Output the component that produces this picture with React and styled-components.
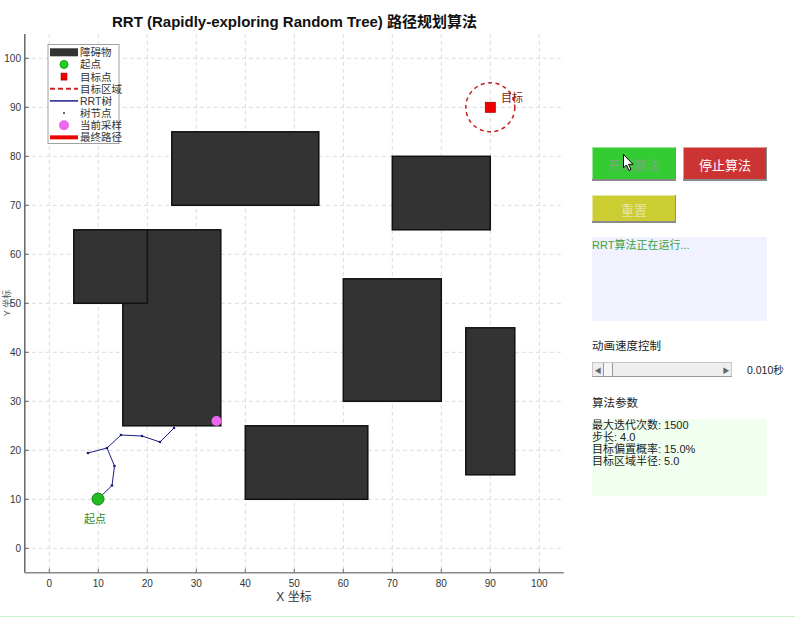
import styled, { createGlobalStyle } from "styled-components";

const FONT = `"Liberation Sans", "Noto Sans CJK SC", sans-serif`;

const GlobalStyle = createGlobalStyle`
  html, body { margin: 0; padding: 0; background: #fff; }
  body { font-family: ${FONT}; overflow: hidden; }
`;

const Window = styled.div`
  position: relative;
  width: 795px;
  height: 616px;
  display: flex;
  background: #ffffff;
  border-bottom: 1px solid #c4f4c4;
`;

const FigurePane = styled.div`
  width: 585px;
  display: flex;
  flex-direction: column;
`;

const Title = styled.h1`
  margin: 0;
  box-sizing: border-box;
  width: 564px;
  height: 34px;
  padding: 13px 0 0 25px;
  text-align: center;
  font-size: 15px;
  line-height: 18px;
  font-weight: bold;
  color: #111;
`;

const ControlPanel = styled.div`
  width: 175px;
  margin-left: 7px;
  padding-top: 147px;
  display: flex;
  flex-direction: column;
`;

const ButtonRow = styled.div`
  display: flex;
  gap: 7px;
`;

const Button = styled.button`
  width: 84px;
  height: ${(p) => p.$h || 34}px;
  margin-top: ${(p) => p.$mt || 0}px;
  padding: 0;
  border: none;
  background: ${(p) => p.$bg};
  color: ${(p) => p.$fg};
  font-family: ${FONT};
  font-size: 13px;
  box-shadow: inset -1px -2px 0 #8a8a8a, inset 1px 1px 0 rgba(255, 255, 255, 0.5);
`;

const StatusBox = styled.div`
  margin-top: 14px;
  height: 84px;
  background: #f1f1ff;
  color: #3ea23e;
  font-size: 11px;
  line-height: 16px;
`;

const SectionLabel = styled.div`
  margin-top: ${(p) => p.$mt}px;
  height: 18px;
  line-height: 18px;
  font-size: 11.5px;
  color: #222;
`;

const SliderRow = styled.div`
  margin-top: 7px;
  display: flex;
  align-items: center;
  height: 15px;
  white-space: nowrap;
`;

const Slider = styled.div`
  flex: none;
  width: 140px;
  height: 15px;
  box-sizing: border-box;
  display: flex;
  background: #eeeeee;
  border: 1px solid #c8c8c8;
  border-bottom-color: #9a9a9a;
`;

const Arrow = styled.div`
  width: 10px;
  display: flex;
  align-items: center;
  justify-content: center;
  font-size: 7px;
  color: #666;
`;

const Thumb = styled.div`
  width: 10px;
  box-sizing: border-box;
  background: #f6f6f6;
  border-left: 1px solid #999;
  border-right: 1px solid #999;
`;

const Track = styled.div`
  flex: 1;
`;

const SliderValue = styled.span`
  flex: none;
  margin-left: 15px;
  font-size: 10.5px;
  color: #222;
`;

const ParamsBox = styled.div`
  margin-top: 7px;
  height: 77px;
  background: #f0fff0;
  font-size: 11px;
  line-height: 12px;
  color: #222;
`;

const Cursor = styled.svg`
  position: absolute;
  left: 623px;
  top: 154px;
`;

const X = (v) => 49.3 + 4.9 * v;
const Y = (v) => 548.3 - 4.9 * v;

const ticks = [0, 10, 20, 30, 40, 50, 60, 70, 80, 90, 100];

// obstacles in data coords [x, y, w, h], drawing order matters
const obstacles = [
  [25, 70, 30, 15],
  [70, 65, 20, 15],
  [15, 25, 20, 40],
  [5, 50, 15, 15],
  [60, 30, 20, 25],
  [85, 15, 10, 30],
  [40, 10, 25, 15],
];

// tree in pixel coords
const nodes = {
  s: [98, 499],
  a: [112, 485.5],
  b: [114.5, 466],
  c: [107, 448],
  d: [88, 453],
  e: [121, 435],
  f: [142, 436],
  g: [160, 442],
  h: [174, 428],
};
const edges = [
  ["s", "a"], ["a", "b"], ["b", "c"], ["c", "d"],
  ["c", "e"], ["e", "f"], ["f", "g"], ["g", "h"],
];

const legend = [
  "障碍物", "起点", "目标点", "目标区域", "RRT树", "树节点", "当前采样", "最终路径",
];

function LegendHandle({ i, y }) {
  switch (i) {
    case 0:
      return <rect x={50} y={y - 4} width={28} height={8} fill="#333" />;
    case 1:
      return <circle cx={64} cy={y} r={4} fill="#22cc22" stroke="#11aa11" />;
    case 2:
      return <rect x={61} y={y - 3.5} width={6} height={7} fill="#ee0000" stroke="#aa0000" strokeWidth={0.6} />;
    case 3:
      return <line x1={50} x2={78} y1={y} y2={y} stroke="#cc2222" strokeWidth={2} strokeDasharray="5 3" />;
    case 4:
      return <line x1={50} x2={78} y1={y} y2={y} stroke="#1c1c88" strokeWidth={1.5} />;
    case 5:
      return <circle cx={64} cy={y} r={1} fill="#333" />;
    case 6:
      return <circle cx={64} cy={y} r={5} fill="#ee66ee" />;
    default:
      return <line x1={50} x2={78} y1={y} y2={y} stroke="#ee0000" strokeWidth={4} />;
  }
}

function Chart() {
  const left = X(-5);
  const right = X(105);
  const top = Y(105);
  const bottom = Y(-5);
  return (
    <svg width="585" height="582" viewBox="0 34 585 582" fontFamily={FONT}>
      {/* grid */}
      {ticks.map((t) => (
        <g key={t} stroke="#dcdcdc" strokeWidth="1" strokeDasharray="4 3">
          <line x1={X(t)} x2={X(t)} y1={top} y2={bottom} />
          <line x1={left} x2={right} y1={Y(t)} y2={Y(t)} />
        </g>
      ))}

      {/* obstacles */}
      {obstacles.map(([x, y, w, h], i) => (
        <rect
          key={i}
          x={X(x)}
          y={Y(y + h)}
          width={w * 4.9}
          height={h * 4.9}
          fill="#333333"
          stroke="#111"
          strokeWidth="1.5"
        />
      ))}

      {/* goal */}
      <circle cx={X(90)} cy={Y(90)} r={24.5} fill="none" stroke="#c02020" strokeWidth="1.5" strokeDasharray="4 3.5" />
      <rect x={X(90) - 5} y={Y(90) - 5} width={10} height={10} fill="#ee0000" stroke="#aa0000" strokeWidth="0.8" />
      <text x={501} y={102} fontSize="11" fill="#8b1010">目标</text>

      {/* tree */}
      {edges.map(([p, q]) => (
        <line
          key={p + q}
          x1={nodes[p][0]}
          y1={nodes[p][1]}
          x2={nodes[q][0]}
          y2={nodes[q][1]}
          stroke="#1c1c88"
          strokeWidth="1"
        />
      ))}
      {Object.entries(nodes).map(([k, [x, y]]) => (
        <circle key={k} cx={x} cy={y} r={1.3} fill="#1c1c70" />
      ))}

      {/* start */}
      <circle cx={98} cy={499} r={6} fill="#22bb22" stroke="#118811" strokeWidth="1" />
      <text x={95} y={523} fontSize="11" fill="#2a8a2a" textAnchor="middle">起点</text>

      {/* current sample */}
      <circle cx={216.5} cy={421} r={5} fill="#ee66ee" />

      {/* axes */}
      <line x1={left} x2={left} y1={top} y2={bottom} stroke="#666" strokeWidth="1.5" />
      <line x1={left} x2={right} y1={bottom} y2={bottom} stroke="#888" strokeWidth="1.5" />
      {ticks.map((t) => (
        <g key={t} fontSize="10" fill="#333">
          <line x1={X(t)} x2={X(t)} y1={bottom} y2={bottom - 4} stroke="#666" />
          <line x1={left} x2={left + 4} y1={Y(t)} y2={Y(t)} stroke="#666" />
          <text x={X(t)} y={587} textAnchor="middle">{t}</text>
          <text x={21} y={Y(t) + 3.5} textAnchor="end">{t}</text>
        </g>
      ))}
      <text x={294} y={601} fontSize="12" fill="#333" textAnchor="middle">X 坐标</text>
      <text x={10} y={303} fontSize="9" fill="#555" textAnchor="middle" transform="rotate(-90 10 303)">Y 坐标</text>

      {/* legend */}
      <rect x={48} y={44.5} width={71} height={99} fill="#fff" stroke="#a0a0a0" />
      {legend.map((label, i) => {
        const y = 52.3 + i * 12.15;
        return (
          <g key={label}>
            <LegendHandle i={i} y={y} />
            <text x={80} y={y + 4} fontSize="10.5" fill="#333">{label}</text>
          </g>
        );
      })}
    </svg>
  );
}

export default function App() {
  return (
    <>
      <GlobalStyle />
      <Window>
        <FigurePane>
          <Title>RRT (Rapidly-exploring Random Tree) 路径规划算法</Title>
          <Chart />
        </FigurePane>

        <ControlPanel>
          <ButtonRow>
            <Button $bg="#33cc33" $fg="#7aa87a">开始算法</Button>
            <Button $bg="#cc3333" $fg="#ffffff">停止算法</Button>
          </ButtonRow>
          <Button $bg="#cccc33" $fg="#e4e4a4" $h={28} $mt={14}>重置</Button>
          <StatusBox>RRT算法正在运行...</StatusBox>

          <SectionLabel $mt={16}>动画速度控制</SectionLabel>
          <SliderRow>
            <Slider>
              <Arrow>◀</Arrow>
              <Thumb />
              <Track />
              <Arrow>▶</Arrow>
            </Slider>
            <SliderValue>0.010秒</SliderValue>
          </SliderRow>

          <SectionLabel $mt={17}>算法参数</SectionLabel>
          <ParamsBox>
            最大迭代次数: 1500
            <br />
            步长: 4.0
            <br />
            目标偏置概率: 15.0%
            <br />
            目标区域半径: 5.0
          </ParamsBox>
        </ControlPanel>

        <Cursor width="12" height="18" viewBox="0 0 12 18">
          <path d="M0.5 0.5 L0.5 14 L3.5 11 L6 16.5 L8 15.5 L5.6 10.3 L10 10.3 Z" fill="#fff" stroke="#000" strokeWidth="1" />
        </Cursor>
      </Window>
    </>
  );
}
